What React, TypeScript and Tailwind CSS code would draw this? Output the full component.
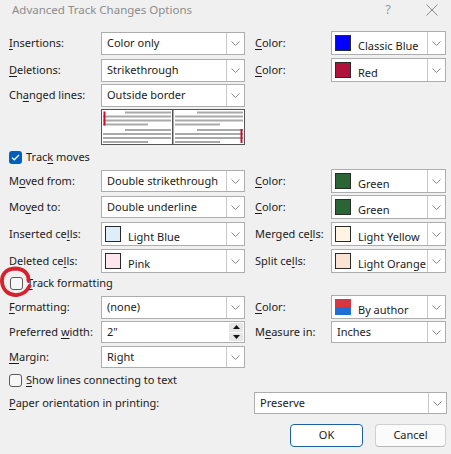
import React from "react";

const FONT = { fontFamily: '"Noto Sans", "Open Sans", sans-serif' };

function Lbl({ pre = "", u, post = "" }: { pre?: string; u: string; post?: string }) {
  return (
    <span className="whitespace-nowrap text-[11px] text-[#1b1b1b]">
      {pre}
      <span className="underline underline-offset-2">{u}</span>
      {post}
    </span>
  );
}

function Chevron() {
  return (
    <svg width="9" height="5" viewBox="0 0 9 5">
      <path d="M0.5 0.5 L4.5 4.5 L8.5 0.5" fill="none" stroke="#7a7a7a" strokeWidth="0.9" />
    </svg>
  );
}

function Drop({ text, h = "h-[22px]" }: { text: string; h?: string }) {
  return (
    <div className={`flex ${h} w-full items-stretch border border-[#adadad] bg-white`}>
      <div className="flex flex-1 items-center whitespace-nowrap pl-[5px] text-[11px] text-[#1b1b1b]">{text}</div>
      <div className="flex w-[18px] items-center justify-center border-l border-[#c9c9c9]">
        <Chevron />
      </div>
    </div>
  );
}

function ColorDrop({ text, swatch }: { text: string; swatch: React.ReactNode }) {
  return (
    <div className="flex h-[24px] w-full items-stretch border border-[#adadad] bg-white">
      <div className="flex flex-1 items-center pl-[3px]">
        {swatch}
        <span className="ml-[7px] mt-[6px] whitespace-nowrap text-[11px] text-[#1b1b1b]">{text}</span>
      </div>
      <div className="flex w-[18px] items-center justify-center border-l border-[#c9c9c9]">
        <Chevron />
      </div>
    </div>
  );
}

function Sw({ c }: { c: string }) {
  return <div className="h-[16px] w-[16px] border border-[#2a2a2a]" style={{ backgroundColor: c }} />;
}

function Check({ checked }: { checked: boolean }) {
  if (checked)
    return (
      <div className="flex h-[13px] w-[13px] items-center justify-center rounded-[3px] bg-[#005fb8]">
        <svg width="9" height="7" viewBox="0 0 9 7">
          <path d="M1 3.6 L3.3 5.8 L8 1" fill="none" stroke="white" strokeWidth="1.3" />
        </svg>
      </div>
    );
  return <div className="h-[13px] w-[13px] rounded-[3px] border border-[#5a5a5a] bg-[#f7f7f7]" />;
}

function Preview() {
  const lines = (ox: number) => (
    <g fill="#a9a9a9">
      <rect x={ox + 24} y={2.5} width={46} height={2} />
      <rect x={ox + 2} y={6.5} width={68} height={2} />
      <rect x={ox + 2} y={10.5} width={68} height={2} />
      <rect x={ox + 2} y={14.5} width={45} height={2} />
      <rect x={ox + 24} y={20} width={46} height={2} />
      <rect x={ox + 2} y={24} width={68} height={2} />
      <rect x={ox + 2} y={28} width={68} height={2} />
      <rect x={ox + 2} y={32} width={45} height={2} />
    </g>
  );
  return (
    <svg width="144" height="36" viewBox="0 0 144 36">
      <rect x="0.5" y="0.5" width="143" height="35" fill="white" stroke="#555" />
      <rect x="71" y="0" width="1.5" height="36" fill="#555" />
      {lines(0)}
      {lines(72)}
      <rect x="2.5" y="2.5" width="2" height="14" fill="#c8102e" />
      <rect x="139.5" y="20" width="2" height="14" fill="#c8102e" />
    </svg>
  );
}

function Spin() {
  return (
    <div className="flex h-[22px] w-full items-stretch border border-[#adadad] bg-white">
      <div className="flex flex-1 items-center pl-[5px] text-[11px] text-[#1b1b1b]">2"</div>
      <div className="flex w-[16px] flex-col gap-[1px] p-[1px]">
        <div className="flex flex-1 items-center justify-center bg-[#e6e6e6]">
          <svg width="7" height="4" viewBox="0 0 7 4"><path d="M0 4 L3.5 0 L7 4 Z" fill="#111" /></svg>
        </div>
        <div className="flex flex-1 items-center justify-center bg-[#e6e6e6]">
          <svg width="7" height="4" viewBox="0 0 7 4"><path d="M0 0 L3.5 4 L7 0 Z" fill="#111" /></svg>
        </div>
      </div>
    </div>
  );
}

const G = "grid grid-cols-[92px_144px_10px_76px_115px] items-center";

export default function App() {
  return (
    <div className="relative h-[454px] w-[451px] overflow-hidden bg-[#f0f0f0] pl-[9px]" style={FONT}>
      {/* title bar */}
      <div className="flex h-[30px] items-start">
        <div className="flex h-[20px] w-full items-center">
          <span className="ml-[3px] text-[11.5px] text-[#8c8c8c]">Advanced Track Changes Options</span>
          <span className="ml-auto mr-[35px] text-[13px] text-[#9a9a9a]">?</span>
          <svg width="12" height="12" viewBox="0 0 12 12" className="mr-[13px]">
            <path d="M0.5 0.5 L11.5 11.5 M11.5 0.5 L0.5 11.5" stroke="#8a8a8a" strokeWidth="1" />
          </svg>
        </div>
      </div>

      <div className={`${G} h-[26px]`}>
        <Lbl u="I" post="nsertions:" />
        <Drop text="Color only" h="h-[23px]" />
        <div />
        <Lbl u="C" post="olor:" />
        <ColorDrop text="Classic Blue" swatch={<Sw c="#0000ff" />} />
      </div>
      <div className={`${G} mt-[1px] h-[26px]`}>
        <Lbl u="D" post="eletions:" />
        <Drop text="Strikethrough" h="h-[23px]" />
        <div />
        <Lbl u="C" post="olor:" />
        <ColorDrop text="Red" swatch={<Sw c="#b0123a" />} />
      </div>
      <div className={`${G} h-[24px]`}>
        <Lbl pre="Ch" u="a" post="nged lines:" />
        <Drop text="Outside border" h="h-[23px]" />
      </div>
      <div className={`${G} mt-[2px] h-[36px]`}>
        <div />
        <Preview />
      </div>
      <div className="flex h-[24px] items-center gap-[4px]">
        <Check checked />
        <Lbl pre="Trac" u="k" post=" moves" />
      </div>
      <div className={`${G} h-[24px]`}>
        <Lbl pre="M" u="o" post="ved from:" />
        <Drop text="Double strikethrough" />
        <div />
        <Lbl u="C" post="olor:" />
        <ColorDrop text="Green" swatch={<Sw c="#2c6535" />} />
      </div>
      <div className={`${G} mt-[2px] h-[24px]`}>
        <Lbl pre="Mo" u="v" post="ed to:" />
        <Drop text="Double underline" />
        <div />
        <Lbl u="C" post="olor:" />
        <ColorDrop text="Green" swatch={<Sw c="#2c6535" />} />
      </div>
      <div className={`${G} mt-[2px] h-[26px]`}>
        <Lbl pre="Inserted ce" u="l" post="ls:" />
        <ColorDrop text="Light Blue" swatch={<Sw c="#ddeef9" />} />
        <div />
        <Lbl pre="Merged ce" u="l" post="ls:" />
        <ColorDrop text="Light Yellow" swatch={<Sw c="#fff3e2" />} />
      </div>
      <div className={`${G} mt-[1px] h-[26px]`}>
        <Lbl pre="Deleted ce" u="l" post="ls:" />
        <ColorDrop text="Pink" swatch={<Sw c="#fde6ee" />} />
        <div />
        <Lbl pre="Split ce" u="l" post="ls:" />
        <ColorDrop text="Light Orange" swatch={<Sw c="#fbe3d3" />} />
      </div>
      <div className="flex h-[18px] items-center gap-[4px] pl-[1px]">
        <Check checked={false} />
        <Lbl u="T" post="rack formatting" />
      </div>
      <div className={`${G} mt-[3px] h-[24px]`}>
        <Lbl u="F" post="ormatting:" />
        <Drop text="(none)" h="h-[23px]" />
        <div />
        <Lbl u="C" post="olor:" />
        <ColorDrop
          text="By author"
          swatch={
            <div className="flex h-[16px] w-[16px] flex-col">
              <div className="flex-1 bg-[#d9363e]" />
              <div className="flex-1 bg-[#1d6fd6]" />
            </div>
          }
        />
      </div>
      <div className={`${G} mt-[2px] h-[22px]`}>
        <Lbl pre="Preferred " u="w" post="idth:" />
        <Spin />
        <div />
        <Lbl pre="M" u="e" post="asure in:" />
        <Drop text="Inches" />
      </div>
      <div className={`${G} mt-[2px] h-[24px]`}>
        <Lbl u="M" post="argin:" />
        <Drop text="Right" />
      </div>
      <div className="flex h-[22px] items-center gap-[4px]">
        <Check checked={false} />
        <Lbl u="S" post="how lines connecting to text" />
      </div>
      <div className="flex h-[24px] items-center">
        <Lbl u="P" post="aper orientation in printing:" />
        <div className="ml-auto mr-[4px] w-[193px]">
          <Drop text="Preserve" />
        </div>
      </div>
      <div className="mt-[9px] flex h-[23px] justify-end gap-[12px] pr-[5px]">
        <button className="w-[73px] rounded-[4px] border border-[#1f5fa8] bg-white text-[11px] text-[#1b1b1b]">OK</button>
        <button className="w-[71px] rounded-[4px] border border-[#d0d0d0] border-b-[#b8b8b8] bg-[#fbfbfb] text-[11px] text-[#1b1b1b]">Cancel</button>
      </div>

      {/* hand-drawn red circle annotation */}
      <svg className="pointer-events-none absolute left-0 top-[265px]" width="36" height="36" viewBox="0 0 36 36">
        <path
          d="M28.5 16 C29 8, 23 3.5, 15 3.5 C6 4, 1.5 9, 2 17 C2.5 25, 9 30.5, 17 30 C23 29.5, 27 26, 29.5 21"
          fill="none"
          stroke="#d4232c"
          strokeWidth="3.8"
          strokeLinecap="round"
        />
      </svg>
    </div>
  );
}
